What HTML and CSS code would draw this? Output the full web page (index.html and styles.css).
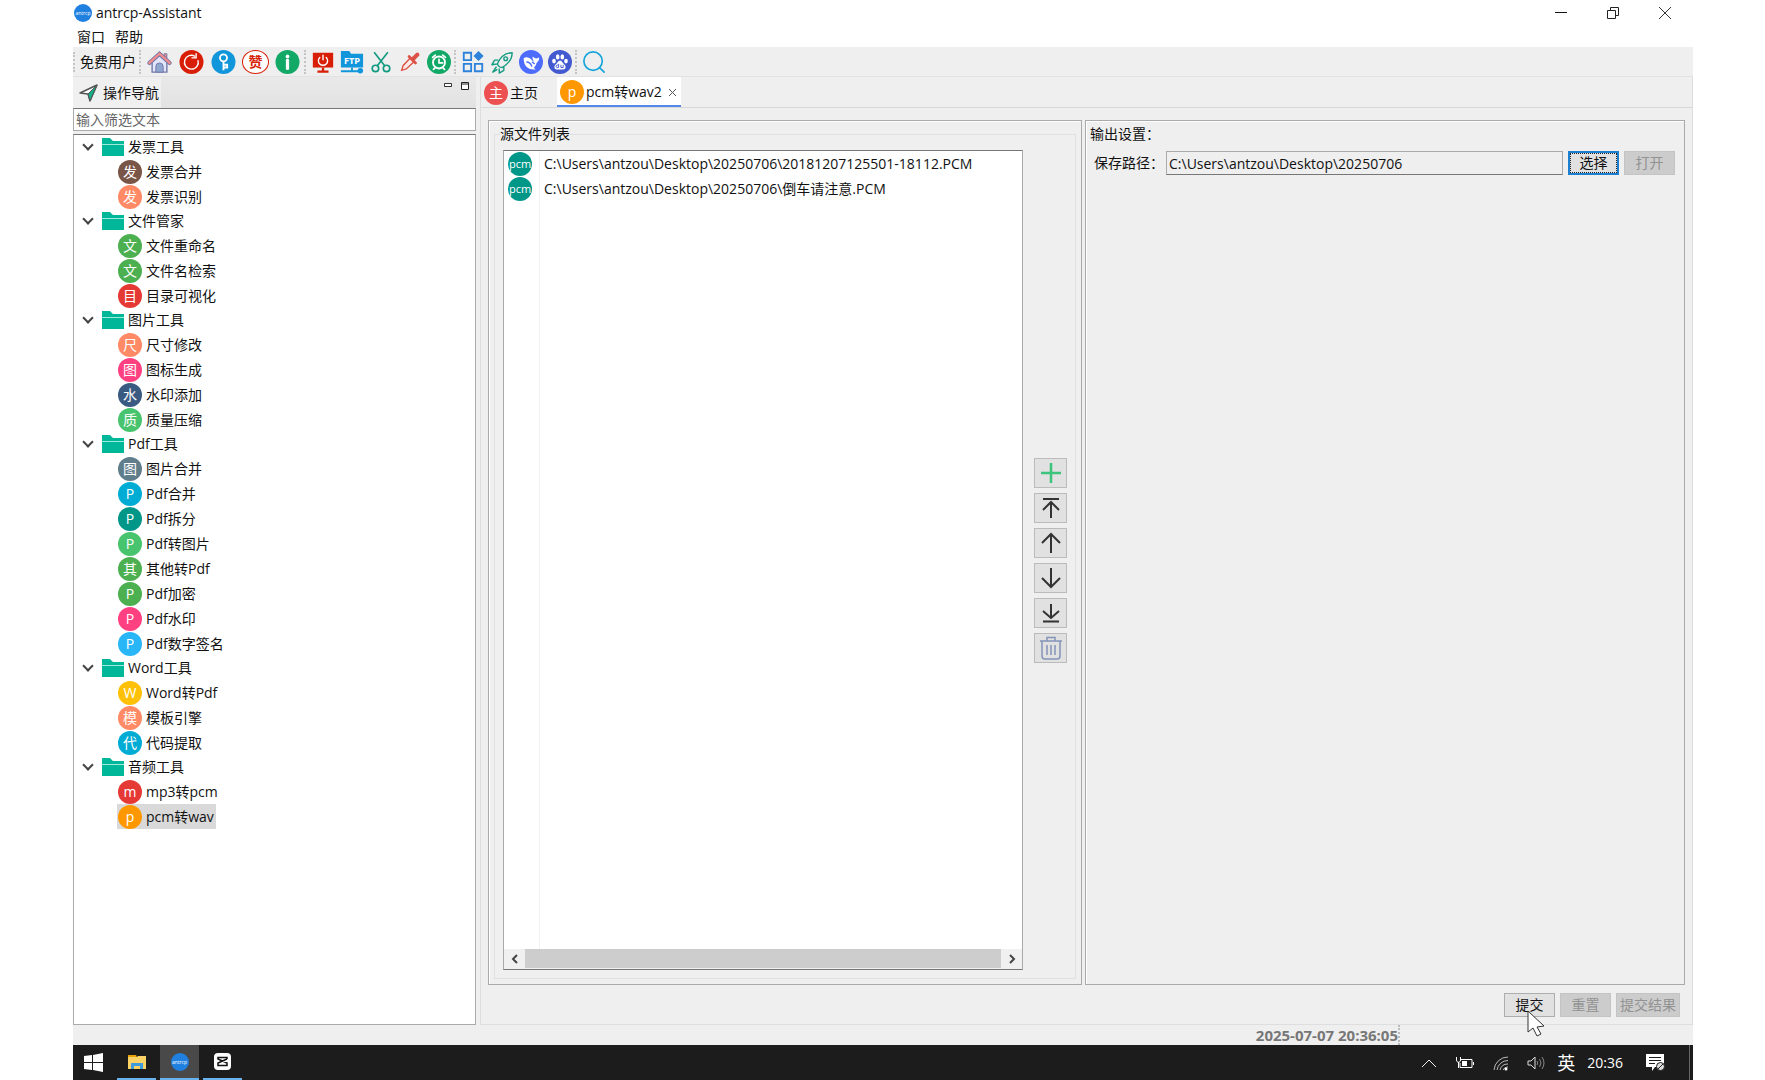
FILE: index.html
```html
<!DOCTYPE html>
<html lang="zh-CN">
<head>
    <meta charset="UTF-8">
    <meta name="viewport" content="width=device-width, initial-scale=1.0">
    <title>antrcp-Assistant</title>
    <link rel="stylesheet" href="styles.css">
</head>
<body>
    <div class="window">
        <header class="titlebar">
            <span class="logo">antrcp</span>
            <h1>antrcp-Assistant</h1>
            <div class="window-buttons">
                <button aria-label="最小化"><svg width="14" height="14" viewBox="0 0 14 14"><path d="M1 6.5h12" stroke="#111"/></svg></button>
                <button aria-label="还原"><svg width="14" height="14" viewBox="0 0 14 14"><path d="M1.5 4.5h8v8h-8zM4.5 4.5v-3h8v8h-3" fill="none" stroke="#222"/></svg></button>
                <button aria-label="关闭"><svg width="14" height="14" viewBox="0 0 14 14"><path d="M1 1l12 12M13 1L1 13" stroke="#333"/></svg></button>
            </div>
        </header>

        <nav class="menubar">
            <button>窗口</button>
            <button>帮助</button>
        </nav>

        <div class="toolbar">
            <div class="tool-group">
                <span class="user">免费用户</span>
            </div>
            <div class="tool-group wide">
                <button aria-label="主页">
                    <svg viewBox="0 0 26 26"><path d="M5 13v11h16V13l-8-7z" fill="#e3e6fb" stroke="#7178a8" stroke-width="1.5"/><path d="M18 4h3v6l-3-3z" fill="#f58c8c" stroke="#7178a8"/><path d="M2 14L13 4l11 10" fill="none" stroke="#7178a8" stroke-width="4.5" stroke-linecap="round"/><path d="M2 14L13 4l11 10" fill="none" stroke="#f58c8c" stroke-width="2.5" stroke-linecap="round"/><path d="M9 24v-6a4 4 0 0 1 8 0v6z" fill="#8fa6cf" stroke="#7178a8"/></svg>
                </button>
                <button aria-label="刷新">
                    <svg viewBox="0 0 26 26"><circle cx="13" cy="13" r="13" fill="#d81e06"/><path d="M17 7a7.5 7.5 0 1 0 3 4" fill="none" stroke="#fff" stroke-width="1.5"/><path d="M18 3.5v5h-5" fill="none" stroke="#fff" stroke-width="1.5"/></svg>
                </button>
                <button aria-label="密钥">
                    <svg viewBox="0 0 26 26"><circle cx="13" cy="13" r="13" fill="#1296db"/><circle cx="13" cy="8.5" r="3.8" fill="none" stroke="#fff" stroke-width="2"/><path d="M13 12v10M13 16h4v3h-4" fill="none" stroke="#fff" stroke-width="2"/></svg>
                </button>
                <button aria-label="赞助"><span class="praise">赞</span></button>
                <button aria-label="关于">
                    <svg viewBox="0 0 26 26"><circle cx="13" cy="13" r="13" fill="#12a866"/><circle cx="13" cy="7" r="2" fill="#fff"/><path d="M13 11v9" stroke="#fff" stroke-width="3.5" stroke-linecap="round"/></svg>
                </button>
            </div>
            <div class="tool-group">
                <button aria-label="关机">
                    <svg viewBox="0 0 26 26"><path d="M2 3h22v16H2z" fill="#d81e06"/><path d="M13 19v4M7 23.5h12" stroke="#d81e06" stroke-width="2.5"/><path d="M9.5 8a5 5 0 1 0 7 0M13 5.5v5" fill="none" stroke="#fff" stroke-width="1.5" stroke-linecap="round"/></svg>
                </button>
                <button aria-label="FTP">
                    <svg viewBox="0 0 26 26"><path d="M1 1h9l2 3h13v15H1z" fill="#1296db"/><path d="M13 19v5M1 23h19" stroke="#1296db" stroke-width="2"/><circle cx="22" cy="22.5" r="3" fill="#1296db"/><text x="13" y="15" text-anchor="middle" font-size="10" font-weight="bold" fill="#fff">FTP</text></svg>
                </button>
                <button aria-label="截图">
                    <svg viewBox="0 0 26 26" fill="none" stroke="#129a80" stroke-width="1.8" stroke-linecap="round"><circle cx="7" cy="20" r="3.5"/><circle cx="19" cy="20" r="3.5"/><path d="M6 3l11 14M20 3L9 17"/></svg>
                </button>
                <button aria-label="取色">
                    <svg viewBox="0 0 26 26"><path d="M13 9L5.5 17 4 22l5-1.5L17 13" fill="#fbeae7" stroke="#dd5246" stroke-width="1.5"/><path d="M12 7l7 7" stroke="#dd5246" stroke-width="3" stroke-linecap="round"/><path d="M16 10l5-5" stroke="#dd5246" stroke-width="4.5" stroke-linecap="round"/></svg>
                </button>
                <button aria-label="闹钟">
                    <svg viewBox="0 0 26 26"><circle cx="13" cy="13" r="13" fill="#12a866"/><circle cx="13" cy="13.5" r="6.5" fill="none" stroke="#fff" stroke-width="2"/><path d="M13 10v4h4M6 8l3-2.5M20 8l-3-2.5M9 19l-2 2M17 19l2 2" fill="none" stroke="#fff" stroke-width="1.8" stroke-linecap="round"/></svg>
                </button>
            </div>
            <div class="tool-group">
                <button aria-label="应用">
                    <svg viewBox="0 0 26 26"><path d="M3 3h8v8H3zM3 15h8v8H3zM15 15h8v8h-8z" fill="none" stroke="#2d83db" stroke-width="2"/><path d="M19 1l5.5 5.5L19 12l-5.5-5.5z" fill="#2d83db"/></svg>
                </button>
                <button aria-label="启动">
                    <svg viewBox="0 0 26 26" fill="none" stroke="#129a80" stroke-width="1.5" stroke-linejoin="round"><path d="M10 18c-1-1-2-2-2-3C11 8 16 3 24 3c0 7-4 12-11 16-1 0-2 0-3-1zM9 11H5l-3 5 6-1M15 18v4l-5 3v-5M7 18l-4 6 5-3"/><circle cx="17" cy="9.5" r="2"/></svg>
                </button>
                <button aria-label="DeepSeek">
                    <svg viewBox="0 0 26 26"><circle cx="13" cy="13" r="13" fill="#4d6bfe"/><path d="M5 9c3-2 6-1 9 2l2 2c0-2-2-3-1-6 2 2 4 3 6 1l1 1c-.5 3-2 4-3 5-.5 3-2 4-3 5l2 2c-6 1-13-2-13-12z" fill="#fff"/><path d="M8 13c3 0 5 2 6 5M14 13l3 2" fill="none" stroke="#4d6bfe" stroke-width="1.5"/></svg>
                </button>
                <button aria-label="百度">
                    <svg viewBox="0 0 26 26"><circle cx="13" cy="13" r="13" fill="#4259d0"/><g fill="#fff"><ellipse cx="6.5" cy="12" rx="2" ry="2.6"/><ellipse cx="10.5" cy="7.5" rx="2" ry="2.8"/><ellipse cx="15.5" cy="7.5" rx="2" ry="2.8"/><ellipse cx="19.5" cy="12" rx="2" ry="2.6"/><path d="M13 11.5c2 0 3 3 5 4.5 2 2 1 5-1.500 5h-7C7 21 6 18 8 16c2-1.500 3-4.500 5-4.500z"/></g><path d="M11.5 15v4H10a1.3 1.3 0 0 1 0-2.600h1.500M14 16v3h2.500v-3" fill="none" stroke="#4259d0"/></svg>
                </button>
            </div>
            <div class="tool-group">
                <button aria-label="搜索">
                    <svg viewBox="0 0 26 26" fill="none" stroke="#15a5dc" stroke-width="1.8" stroke-linecap="round"><circle cx="12" cy="12" r="10"/><path d="M19 19l5 5"/></svg>
                </button>
            </div>
        </div>

        <div class="workbench">
            <aside class="navigator">
                <div class="nav-head">
                    <div class="nav-tab">
                        <svg width="19" height="18" viewBox="0 0 19 18"><path d="M1 9L18 1l-7 16-2-7z" fill="#fff" stroke="#555" stroke-width="1.5" stroke-linejoin="round"/><path d="M18 1l-7 16-2-7z" fill="#14b08a" stroke="#555"/></svg>
                        <span>操作导航</span>
                    </div>
                    <div class="nav-controls">
                        <button aria-label="最小化视图"><svg width="10" height="10" viewBox="0 0 10 10"><path d="M1.5 2.5h7v3h-7z" fill="#fff" stroke="#333"/></svg></button>
                        <button aria-label="最大化视图"><svg width="10" height="10" viewBox="0 0 10 10"><path d="M1.5 1.5h7v7h-7zM1 3h8" fill="#fff" stroke="#222"/></svg></button>
                    </div>
                </div>
                <input class="filter" type="text" placeholder="输入筛选文本" aria-label="输入筛选文本">
                <div class="tree">
                    <details open>
                        <summary><i class="arrow"></i><i class="folder"></i>发票工具</summary>
                        <a href="#"><span class="badge brown">发</span>发票合并</a>
                        <a href="#"><span class="badge coral">发</span>发票识别</a>
                    </details>
                    <details open>
                        <summary><i class="arrow"></i><i class="folder"></i>文件管家</summary>
                        <a href="#"><span class="badge green">文</span>文件重命名</a>
                        <a href="#"><span class="badge green">文</span>文件名检索</a>
                        <a href="#"><span class="badge red">目</span>目录可视化</a>
                    </details>
                    <details open>
                        <summary><i class="arrow"></i><i class="folder"></i>图片工具</summary>
                        <a href="#"><span class="badge coral">尺</span>尺寸修改</a>
                        <a href="#"><span class="badge pink">图</span>图标生成</a>
                        <a href="#"><span class="badge navy">水</span>水印添加</a>
                        <a href="#"><span class="badge mint">质</span>质量压缩</a>
                    </details>
                    <details open>
                        <summary><i class="arrow"></i><i class="folder"></i>Pdf工具</summary>
                        <a href="#"><span class="badge slate">图</span>图片合并</a>
                        <a href="#"><span class="badge cyan">P</span>Pdf合并</a>
                        <a href="#"><span class="badge teal">P</span>Pdf拆分</a>
                        <a href="#"><span class="badge mint">P</span>Pdf转图片</a>
                        <a href="#"><span class="badge green">其</span>其他转Pdf</a>
                        <a href="#"><span class="badge green">P</span>Pdf加密</a>
                        <a href="#"><span class="badge pink">P</span>Pdf水印</a>
                        <a href="#"><span class="badge sky">P</span>Pdf数字签名</a>
                    </details>
                    <details open>
                        <summary><i class="arrow"></i><i class="folder"></i>Word工具</summary>
                        <a href="#"><span class="badge yellow">W</span>Word转Pdf</a>
                        <a href="#"><span class="badge coral">模</span>模板引擎</a>
                        <a href="#"><span class="badge cyan">代</span>代码提取</a>
                    </details>
                    <details open>
                        <summary><i class="arrow"></i><i class="folder"></i>音频工具</summary>
                        <a href="#"><span class="badge red">m</span>mp3转pcm</a>
                        <a href="#" class="selected"><span class="badge orange">p</span>pcm转wav</a>
                    </details>
                </div>
            </aside>

            <main class="editor">
                <div class="tabs">
                    <button class="tab"><span class="badge rose">主</span>主页</button>
                    <button class="tab active"><span class="badge orange">p</span>pcm转wav2<svg width="9" height="9" viewBox="0 0 9 9"><path d="M1 1l7 7M8 1L1 8" stroke="#555"/></svg></button>
                </div>

                <div class="panels">
                    <section class="panel source">
                        <fieldset>
                            <legend>源文件列表</legend>
                            <div class="file-box">
                                <div class="file-list">
                                    <table>
                                        <tr>
                                            <td><span class="badge teal">pcm</span></td>
                                            <td>C:\Users\antzou\Desktop\20250706\20181207125501-18112.PCM</td>
                                        </tr>
                                        <tr>
                                            <td><span class="badge teal">pcm</span></td>
                                            <td>C:\Users\antzou\Desktop\20250706\倒车请注意.PCM</td>
                                        </tr>
                                    </table>
                                </div>
                                <div class="scrollbar">
                                    <button aria-label="向左滚动"><svg width="8" height="10" viewBox="0 0 8 10"><path d="M6 1L2 5l4 4" fill="none" stroke="#444" stroke-width="2"/></svg></button>
                                    <div class="thumb"></div>
                                    <button aria-label="向右滚动"><svg width="8" height="10" viewBox="0 0 8 10"><path d="M2 1l4 4-4 4" fill="none" stroke="#444" stroke-width="2"/></svg></button>
                                </div>
                            </div>
                            <div class="file-actions">
                                <button aria-label="添加"><svg viewBox="0 0 24 24" stroke="#3cc47c" stroke-width="2.5"><path d="M12 2v20M2 12h20"/></svg></button>
                                <button aria-label="置顶"><svg viewBox="0 0 24 24" stroke="#333" stroke-width="2"><path d="M4 3h16M12 22V6M4 14l8-8 8 8"/></svg></button>
                                <button aria-label="上移"><svg viewBox="0 0 24 24" stroke="#333" stroke-width="2"><path d="M12 22V3M3 12l9-9 9 9"/></svg></button>
                                <button aria-label="下移"><svg viewBox="0 0 24 24" stroke="#333" stroke-width="2"><path d="M12 2v19M3 12l9 9 9-9"/></svg></button>
                                <button aria-label="置底"><svg viewBox="0 0 24 24" stroke="#333" stroke-width="2"><path d="M4 20.5h16M12 3v14M4 10l8 7 8-7"/></svg></button>
                                <button aria-label="删除"><svg viewBox="0 0 24 24" stroke="#8493b8" stroke-width="1.5"><path d="M1 5h22M8 5V1.5h8V5M3 5v15a3 3 0 0 0 3 3h12a3 3 0 0 0 3-3V5M8 9v10M12 9v10M16 9v10"/></svg></button>
                            </div>
                        </fieldset>
                    </section>

                    <section class="panel output">
                        <h2>输出设置：</h2>
                        <div class="path-row">
                            <label for="path">保存路径：</label>
                            <input id="path" type="text" value="C:\Users\antzou\Desktop\20250706" readonly>
                            <button class="btn focused">选择</button>
                            <button class="btn" disabled>打开</button>
                        </div>
                    </section>
                </div>

                <div class="actions">
                    <div class="submit">
                        <button class="btn">提交</button>
                        <svg class="cursor" width="18" height="28" viewBox="0 0 18 28"><path d="M1 1v21l5-4 4 8 4-2-4-7 7-1z" fill="#fff" stroke="#333"/></svg>
                    </div>
                    <button class="btn" disabled>重置</button>
                    <button class="btn" disabled>提交结果</button>
                </div>
            </main>
        </div>

        <footer class="status"><time>2025-07-07 20:36:05</time></footer>

        <div class="taskbar">
            <button class="start" aria-label="开始"><svg width="19" height="19" viewBox="0 0 19 19"><path d="M0 3l8-1v7H0zM9 2l10-2v9H9zM0 10h8v7l-8-1zM9 10h10v9L9 17z" fill="#fff"/></svg></button>
            <button class="task open" aria-label="文件资源管理器"><svg width="18" height="16" viewBox="0 0 18 16"><path d="M0 1h8l1 2H0z" fill="#e8a008"/><path d="M0 3h9l1-1h8v13H0z" fill="#fbd265"/><path d="M3 15V9h12v6h-3v-3H6v3z" fill="#3f9bdc"/></svg></button>
            <button class="task open current" aria-label="antrcp"><span class="logo">antrcp</span></button>
            <button class="task open" aria-label="剪映"><svg width="17" height="17" viewBox="0 0 17 17"><rect width="17" height="17" rx="4" fill="#fff"/><path d="M13 6V4.5H4V6l9 4v2.500H4V10l9-4" fill="none" stroke="#111" stroke-width="1.5"/></svg></button>
            <div class="tray">
                <button aria-label="显示隐藏的图标"><svg width="16" height="10" viewBox="0 0 16 10"><path d="M1 9l7-7 7 7" fill="none" stroke="#eee"/></svg></button>
                <button aria-label="电池"><svg width="20" height="14" viewBox="0 0 20 14"><path d="M6 3.5h11v8H5V7M18.500 6v3M1.500 1v3c0 3 4 3 4 0V1M3.500 6v6" fill="none" stroke="#fff"/><path d="M7 5h5v5H7z" fill="#fff"/></svg></button>
                <button aria-label="网络"><svg width="16" height="16" viewBox="0 0 16 16"><path d="M1 15A14 14 0 0 1 15 2M4 15A11 11 0 0 1 15 5.500M7 15a8 8 0 0 1 8-6M10 15a5 5 0 0 1 5-3" fill="none" stroke="#bbb"/><circle cx="13" cy="14" r="1.5" fill="#fff"/></svg></button>
                <button aria-label="音量"><svg width="18" height="14" viewBox="0 0 18 14"><path d="M1 5h3l4-4v12L4 9H1z" fill="none" stroke="#ddd"/><path d="M10 5q1.500 2 0 4M12.500 3q3 4 0 8M15 1q4 6 0 12" fill="none" stroke="#888"/></svg></button>
                <div class="clock">
                    <button class="ime">英</button>
                    <time>20:36</time>
                </div>
                <button aria-label="通知"><svg width="20" height="19" viewBox="0 0 20 19"><path d="M1 1h18v13h-9l-3 4v-4H1z" fill="#fff"/><path d="M4 4.5h12M4 7.5h12M4 10.5h6" stroke="#1c1c1c"/><circle cx="15.5" cy="13.5" r="4" fill="#ddd" stroke="#1c1c1c"/><path d="M13 16l5-5" stroke="#1c1c1c"/></svg></button>
            </div>
        </div>
    </div>
</body>
</html>
```
FILE: styles.css
```css
* {
    box-sizing: border-box;
}
body {
    margin: 0;
    background-color: #fff;
    color: #111;
    font-family: 'Open Sans', 'Noto Sans CJK SC', sans-serif;
    font-size: 14px;
    line-height: 20px;
}
button, input {
    font: inherit;
    color: inherit;
    margin: 0;
}
button {
    padding: 0;
    border: none;
    background: none;
}
svg {
    display: block;
}
.window {
    display: flex;
    flex-direction: column;
    height: 100vh;
    margin: 0 72px 0 73px;
}

/* title and menu */
.titlebar {
    display: flex;
    align-items: center;
    gap: 4px;
    height: 26px;
    padding-left: 1px;
}
.titlebar h1 {
    margin: 0;
    font-size: 14px;
    font-weight: normal;
}
.logo {
    width: 18px;
    height: 18px;
    border-radius: 50%;
    background-color: #2080e0;
    color: #fff;
    font-size: 5px;
    line-height: 18px;
    text-align: center;
}
.window-buttons {
    display: flex;
    gap: 38px;
    margin-left: auto;
    padding-right: 21px;
}
.menubar {
    display: flex;
    gap: 10px;
    height: 21px;
    padding-left: 4px;
}

/* toolbar */
.toolbar {
    display: flex;
    align-items: center;
    height: 30px;
    background-color: #efefef;
    border-bottom: 1px solid #e2e2e2;
}
.tool-group {
    display: flex;
    align-items: center;
    gap: 5px;
    padding: 0 3px 0 5px;
    border-left: 2px dotted #c4c4c4;
}
.tool-group svg {
    width: 24px;
    height: 24px;
}
.wide button svg {
    width: 27px;
}
.praise {
    display: block;
    width: 27px;
    height: 24px;
    border: 1px solid #d81e06;
    border-radius: 50%;
    background-color: #fff;
    color: #d81e06;
    font-size: 14px;
    font-weight: bold;
    line-height: 21px;
}

/* left view */
.workbench {
    display: flex;
    gap: 4px;
    flex: 1;
    min-height: 0;
    background-color: #efefef;
}
.navigator {
    display: flex;
    flex-direction: column;
    width: calc(25% - 2px);
}
.nav-head {
    display: flex;
    justify-content: space-between;
    height: 31px;
    background: linear-gradient(#e9e9e9, #e2e2e2);
}
.nav-tab {
    display: flex;
    align-items: center;
    gap: 5px;
    padding: 0 2px 0 6px;
    background-color: #f0f0f0;
}
.nav-controls {
    display: flex;
    gap: 7px;
    align-items: flex-start;
    padding: 4px 6px;
}
.filter {
    height: 23px;
    padding: 0 2px;
    border: 1px solid #aaa;
    border-top-color: #777;
    background-color: #fff;
    color: #555;
}
.filter::placeholder {
    color: #666;
}
.tree {
    flex: 1;
    min-height: 0;
    margin-top: 3px;
    border: 1px solid #aaa;
    border-top-color: #777;
    background-color: #fff;
    overflow: hidden;
}
summary {
    display: flex;
    align-items: center;
    height: 24px;
    padding-left: 8px;
    list-style: none;
}
.arrow {
    width: 8px;
    height: 8px;
    margin: 0 10px 5px 2px;
    border: solid #444;
    border-width: 0 2px 2px 0;
    transform: rotate(45deg);
}
.folder {
    width: 22px;
    height: 18px;
    margin-right: 4px;
    background: linear-gradient(#9eeadb, #9eeadb) 0 6px / 22px 1px no-repeat, #00b899;
    clip-path: polygon(0 0, 8px 0, 11px 3px, 22px 3px, 22px 18px, 0 18px);
}
.tree a {
    display: flex;
    align-items: center;
    gap: 4px;
    width: max-content;
    height: 25px;
    margin-left: 43px;
    padding: 0 2px 0 1px;
    color: inherit;
    text-decoration: none;
}
.tree .selected {
    background-color: #d9d9d9;
}
.badge {
    display: block;
    flex: none;
    width: 24px;
    height: 24px;
    border-radius: 50%;
    color: #fff;
    line-height: 24px;
    text-align: center;
}
.brown { background-color: #795548; }
.coral { background-color: #ff8a65; }
.green { background-color: #4caf50; }
.red { background-color: #e53935; }
.rose { background-color: #ec5050; }
.pink { background-color: #ff4081; }
.navy { background-color: #3b5a82; }
.mint { background-color: #48c46e; }
.slate { background-color: #607d8b; }
.cyan { background-color: #00acd4; }
.teal { background-color: #009688; }
.sky { background-color: #29b6f6; }
.yellow { background-color: #ffc107; }
.orange { background-color: #ff9800; }

/* editor */
.editor {
    display: flex;
    flex-direction: column;
    flex: 1;
    min-width: 0;
    border: 1px solid #dedede;
    border-top: none;
}
.tabs {
    display: flex;
    height: 31px;
    border-bottom: 1px solid #d8d8d8;
}
.tab {
    display: flex;
    align-items: center;
    gap: 2px;
    padding: 2px 19px 0 3px;
}
.tab.active {
    padding: 2px 4px 0 3px;
    border-bottom: 2px solid #5288e8;
    background-color: #fff;
}
.tab.active svg {
    margin-left: 4px;
}
.panels {
    display: flex;
    gap: 3px;
    flex: 1;
    min-height: 0;
    padding: 12px 7px 0;
}
.panel {
    flex: 1;
    min-width: 0;
    border: 1px solid #aaa;
    box-shadow: inset 1px 1px #fff;
}
.source {
    display: flex;
    padding: 3px 5px 5px;
}
fieldset {
    display: flex;
    flex: 1;
    min-width: 0;
    margin: 0;
    padding: 6px 8px 8px;
    border: 1px solid #e0e0e0;
}
legend {
    margin-left: -3px;
    padding: 0;
}
.file-box {
    display: flex;
    flex-direction: column;
    flex: 1;
    min-width: 0;
    border: 1px solid #aaa;
    border-top-color: #777;
    border-bottom-color: #777;
    background-color: #fff;
}
.file-list {
    flex: 1;
    background: linear-gradient(#f0f3f6, #f0f3f6) 35px 0 / 1px 100% no-repeat;
}
table {
    border-collapse: collapse;
}
td {
    height: 25px;
    padding: 0 2px 0 4px;
    white-space: nowrap;
}
td:first-child {
    width: 36px;
}
td .badge {
    font-size: 11px;
}
.scrollbar {
    display: flex;
    height: 20px;
    background-color: #f0f0f0;
}
.scrollbar button {
    display: flex;
    align-items: center;
    justify-content: center;
    width: 21px;
}
.thumb {
    flex: 1;
    margin-bottom: 1px;
    background-color: #cdcdcd;
}
.file-actions {
    display: flex;
    flex-direction: column;
    justify-content: center;
    gap: 5px;
    padding-left: 11px;
}
.file-actions button {
    display: flex;
    align-items: center;
    justify-content: center;
    width: 33px;
    height: 30px;
    border: 1px solid #bbb;
    background-color: #e1e1e1;
}
.file-actions svg {
    width: 24px;
    height: 24px;
    fill: none;
}
.output {
    padding: 3px 8px;
}
h2 {
    margin: 0 -4px 7px;
    font-size: 14px;
    font-weight: normal;
}
.path-row {
    display: flex;
    align-items: center;
    gap: 5px;
    margin-right: 1px;
}
.path-row label {
    margin-right: -3px;
}
.path-row input {
    flex: 1;
    min-width: 0;
    height: 24px;
    padding: 0 2px;
    border: 1px solid #aaa;
    border-bottom-color: #777;
    background-color: #efefef;
}
.btn {
    min-width: 51px;
    height: 24px;
    padding: 0 3px;
    border: 1px solid #adadad;
    background-color: #e1e1e1;
}
.btn:disabled {
    border-color: #c4c4c4;
    background-color: #cccccc;
    color: #929292;
}
.btn.focused {
    border: 2px solid #1c7fd0;
    outline: 1px dotted #222;
    outline-offset: -3px;
}
.actions {
    display: flex;
    justify-content: flex-end;
    gap: 5px;
    padding: 8px 12px 7px;
}
.submit {
    position: relative;
}
.cursor {
    position: absolute;
    left: 23px;
    top: 17px;
}

/* bottom bars */
.status {
    height: 20px;
    padding-right: 293px;
    background-color: #efefef;
    color: #777;
    font-size: 15px;
    font-weight: bold;
    text-align: right;
}
.status time {
    border-right: 2px dotted #bbb;
}
.taskbar {
    display: flex;
    height: 35px;
    background-color: #1c1c1c;
    color: #fff;
}
.taskbar button {
    display: flex;
    align-items: center;
    justify-content: center;
}
.start {
    width: 40px;
    margin-right: 4px;
}
.task {
    width: 39px;
    margin-right: 4px;
}
.open {
    border-bottom: 2px solid #68b2ee;
}
.current {
    background-color: #494949;
}
.tray {
    display: flex;
    align-items: center;
    gap: 18px;
    margin-left: auto;
    padding-right: 24px;
    margin-right: 3px;
    border-right: 1px solid #666;
}
.clock {
    display: flex;
    align-items: center;
    gap: 12px;
    margin: 0 4px 0 -6px;
}
.ime {
    font-size: 18px;
}
```
